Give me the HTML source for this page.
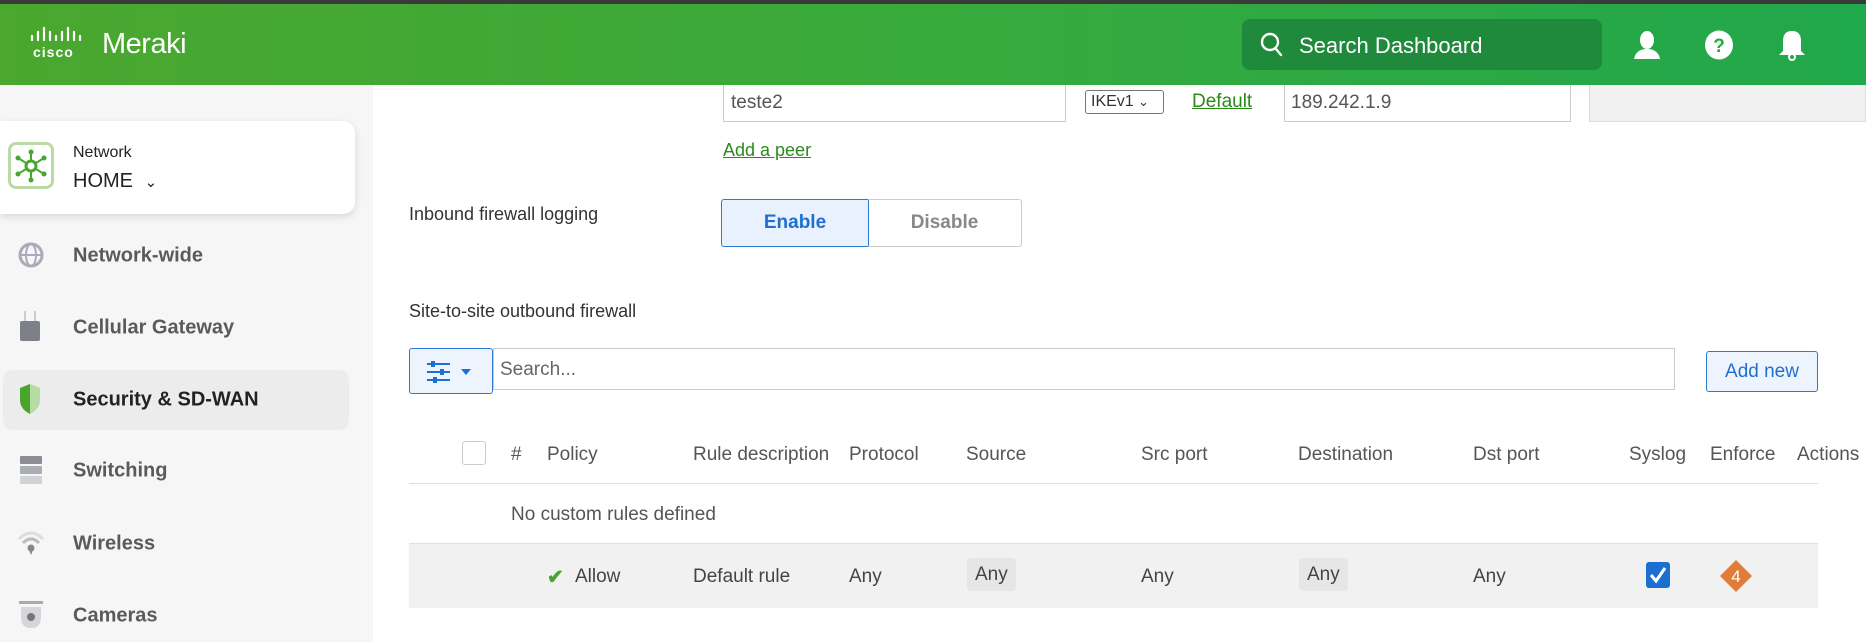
<!DOCTYPE html>
<html><head><meta charset="utf-8"><style>
*{box-sizing:border-box;margin:0;padding:0}
body{width:1866px;height:642px;overflow:hidden;background:#fff;font-family:"Liberation Sans",sans-serif;position:relative;color:#444}
.a{position:absolute;white-space:nowrap}
#top{left:0;top:0;width:1866px;height:4px;background:#3a3a3a}
#hdr{left:0;top:4px;width:1866px;height:81px;background:linear-gradient(90deg,#4ba72e 0%,#38aa3c 50%,#20a84c 100%)}
#side{left:0;top:85px;width:373px;height:557px;background:#f6f6f6}
.nav{left:73px;font-size:20px;font-weight:bold;color:#5a5a5a;transform:translateY(-50%)}
.ic{left:17px;transform:translateY(-50%)}
.hd{top:455px;font-size:19px;color:#555;transform:translateY(-50%)}
.rw{top:577px;font-size:19px;color:#444;transform:translateY(-50%)}
.any{background:#e6e6e6;border-radius:4px;padding:6px 8px;margin-left:-8px}
</style></head><body>
<div class="a" id="top"></div>
<div class="a" id="hdr"></div>
<svg class="a" style="left:30px;top:26px" width="58" height="34" viewBox="0 0 58 34">
<g stroke="#fff" stroke-width="2.2" stroke-linecap="round">
<line x1="2" y1="10" x2="2" y2="14"/><line x1="8" y1="6" x2="8" y2="14"/><line x1="14" y1="2" x2="14" y2="14"/><line x1="20" y1="6" x2="20" y2="14"/><line x1="26" y1="10" x2="26" y2="14"/><line x1="32" y1="6" x2="32" y2="14"/><line x1="38" y1="2" x2="38" y2="14"/><line x1="44" y1="6" x2="44" y2="14"/><line x1="50" y1="10" x2="50" y2="14"/></g>
<text x="3" y="31" fill="#fff" font-family="Liberation Sans" font-weight="bold" font-size="14" letter-spacing="1">cisco</text></svg>
<div class="a" style="left:102px;top:28px;font-size:29px;color:#fff;letter-spacing:-0.5px">Meraki</div>
<div class="a" style="left:1242px;top:19px;width:360px;height:51px;background:#1f8a3c;border-radius:8px"></div>
<svg class="a" style="left:1260px;top:32px" width="24" height="26" viewBox="0 0 24 26"><circle cx="10" cy="10" r="8" fill="none" stroke="#fff" stroke-width="2.4"/><line x1="16" y1="17" x2="21" y2="23" stroke="#fff" stroke-width="2.4" stroke-linecap="round"/></svg>
<div class="a" style="left:1299px;top:33px;font-size:22px;color:#fff">Search Dashboard</div>
<svg class="a" style="left:1632px;top:30px" width="30" height="30" viewBox="0 0 30 30"><ellipse cx="15" cy="10" rx="7" ry="9" fill="#fff"/><path d="M2 29 Q4 19 15 19 Q26 19 28 29Z" fill="#fff"/></svg>
<svg class="a" style="left:1704px;top:30px" width="30" height="30" viewBox="0 0 30 30"><ellipse cx="15" cy="15" rx="14" ry="14.5" fill="#fff"/><text x="15" y="22" text-anchor="middle" font-family="Liberation Sans" font-weight="bold" font-size="19" fill="#2aa83f">?</text></svg>
<svg class="a" style="left:1777px;top:29px" width="30" height="32" viewBox="0 0 30 32"><path d="M15 2 Q6 2 6 12 L6 22 L2 26 L28 26 L24 22 L24 12 Q24 2 15 2Z" fill="#fff"/><circle cx="15" cy="28" r="3" fill="none" stroke="#fff" stroke-width="2"/></svg>

<div class="a" id="side"></div>
<div class="a" style="left:0;top:121px;width:355px;height:93px;background:#fff;border-radius:0 12px 12px 0;box-shadow:0 3px 8px rgba(0,0,0,.12)"></div>
<div class="a" style="left:8px;top:142px;width:46px;height:47px;border:3px solid #b9dca6;border-radius:8px;background:#fff"></div>
<svg class="a" style="left:14px;top:148px" width="34" height="36" viewBox="0 0 34 36"><g stroke="#4aa52e" stroke-width="2"><line x1="17" y1="4" x2="17" y2="32"/><line x1="4" y1="10" x2="30" y2="26"/><line x1="4" y1="26" x2="30" y2="10"/></g><g fill="#4aa52e"><circle cx="17" cy="4" r="2.5"/><circle cx="17" cy="32" r="2.5"/><circle cx="4" cy="10" r="2.5"/><circle cx="30" cy="26" r="2.5"/><circle cx="4" cy="26" r="2.5"/><circle cx="30" cy="10" r="2.5"/></g><circle cx="17" cy="18" r="5" fill="#fff" stroke="#4aa52e" stroke-width="3"/></svg>
<div class="a" style="left:73px;top:144px;font-size:16px;color:#222">Network</div>
<div class="a" style="left:73px;top:170px;font-size:20px;color:#222">HOME <span style="font-size:15px;margin-left:6px">&#8964;</span></div>

<div class="a" style="left:3px;top:370px;width:346px;height:60px;background:#ececec;border-radius:10px"></div>
<svg class="a ic" style="top:255px" width="28" height="32" viewBox="0 0 28 32"><circle cx="14" cy="16" r="11" fill="none" stroke="#aab" stroke-width="3"/><ellipse cx="14" cy="16" rx="5" ry="11" fill="none" stroke="#aab" stroke-width="2"/><line x1="3" y1="16" x2="25" y2="16" stroke="#aab" stroke-width="2"/></svg>
<div class="a nav" style="top:256px">Network-wide</div>
<svg class="a ic" style="top:327px" width="26" height="32" viewBox="0 0 26 32"><rect x="3" y="10" width="20" height="20" rx="2" fill="#7d8088"/><rect x="7" y="0" width="2" height="10" fill="#ccc"/><rect x="17" y="0" width="2" height="10" fill="#ccc"/></svg>
<div class="a nav" style="top:328px">Cellular Gateway</div>
<svg class="a ic" style="top:399px" width="26" height="32" viewBox="0 0 26 32"><path d="M13 1 L13 31 Q3 26 3 17 L3 5Z" fill="#4aa52e"/><path d="M13 1 L23 5 L23 17 Q23 26 13 31Z" fill="#b6dba3"/></svg>
<div class="a nav" style="top:400px;color:#222">Security &amp; SD-WAN</div>
<svg class="a ic" style="top:470px" width="26" height="30" viewBox="0 0 26 30"><rect x="3" y="1" width="22" height="8" rx="1" fill="#8a8d94"/><rect x="3" y="11" width="22" height="8" rx="1" fill="#aaadb3"/><rect x="3" y="21" width="22" height="8" rx="1" fill="#d0d2d6"/></svg>
<div class="a nav" style="top:471px">Switching</div>
<svg class="a ic" style="top:543px" width="28" height="28" viewBox="0 0 28 28"><path d="M2 10 Q14 -2 26 10" fill="none" stroke="#ddd" stroke-width="3"/><path d="M6 14 Q14 6 22 14" fill="none" stroke="#bbb" stroke-width="3"/><circle cx="14" cy="19" r="3.5" fill="#888"/><path d="M12 21 L14 26 L16 21Z" fill="#888"/></svg>
<div class="a nav" style="top:544px">Wireless</div>
<svg class="a ic" style="top:615px" width="28" height="30" viewBox="0 0 28 30"><rect x="2" y="1" width="24" height="3" fill="#aaa"/><path d="M4 7 L24 7 L24 17 Q24 28 14 28 Q4 28 4 17Z" fill="#d4d6da"/><circle cx="14" cy="17" r="4" fill="#777"/></svg>
<div class="a nav" style="top:616px">Cameras</div>

<div class="a" style="left:723px;top:85px;width:343px;height:37px;border:1px solid #ccc;border-top:none"></div>
<div class="a" style="left:731px;top:92px;font-size:19px;color:#555">teste2</div>
<div class="a" style="left:1085px;top:90px;width:79px;height:24px;border:1px solid #777;border-radius:3px;font-size:16px;color:#333;padding:2px 5px">IKEv1 <span style="font-size:13px">&#8964;</span></div>
<div class="a" style="left:1192px;top:91px;font-size:19px;color:#2a8a1a;text-decoration:underline">Default</div>
<div class="a" style="left:1284px;top:85px;width:287px;height:37px;border:1px solid #ccc;border-top:none"></div>
<div class="a" style="left:1291px;top:92px;font-size:19px;color:#555">189.242.1.9</div>
<div class="a" style="left:1589px;top:85px;width:277px;height:37px;background:#f1f1f1;border:1px solid #ddd;border-top:none"></div>
<div class="a" style="left:723px;top:140px;font-size:18px;color:#2a8a1a;text-decoration:underline">Add a peer</div>

<div class="a" style="left:409px;top:204px;font-size:18px;color:#333">Inbound firewall logging</div>
<div class="a" style="left:721px;top:199px;width:148px;height:48px;background:#e8f1fd;border:1px solid #2a7ad6;border-radius:3px 0 0 3px;font-size:19px;font-weight:bold;color:#1f6fd0;text-align:center;line-height:46px">Enable</div>
<div class="a" style="left:868px;top:199px;width:154px;height:48px;border:1px solid #ccc;border-left:none;border-radius:0 3px 3px 0;font-size:19px;font-weight:bold;color:#888;text-align:center;line-height:46px">Disable</div>

<div class="a" style="left:409px;top:301px;font-size:18px;color:#333">Site-to-site outbound firewall</div>
<div class="a" style="left:409px;top:348px;width:84px;height:46px;background:#edf4fd;border:1px solid #2a7ad6;border-radius:3px"></div>
<svg class="a" style="left:426px;top:360px" width="50" height="24" viewBox="0 0 50 24"><g stroke="#1f6fd0" stroke-width="2"><line x1="1" y1="4" x2="24" y2="4"/><line x1="1" y1="12" x2="24" y2="12"/><line x1="1" y1="20" x2="24" y2="20"/></g><g fill="#1f6fd0"><rect x="5" y="1" width="4" height="6"/><rect x="14" y="9" width="4" height="6"/><rect x="7" y="17" width="4" height="6"/><path d="M35 9 L45 9 L40 15Z"/></g></svg>
<div class="a" style="left:493px;top:348px;width:1182px;height:42px;border:1px solid #ccc"></div>
<div class="a" style="left:500px;top:359px;font-size:19px;color:#666">Search...</div>
<div class="a" style="left:1706px;top:351px;width:112px;height:41px;background:#edf4fd;border:1px solid #2a7ad6;border-radius:3px;font-size:19px;color:#1f6fd0;text-align:center;line-height:39px">Add new</div>

<div class="a" style="left:462px;top:441px;width:24px;height:24px;border:1px solid #ccc;border-radius:3px;background:#fff"></div>
<div class="a hd" style="left:511px">#</div>
<div class="a hd" style="left:547px">Policy</div>
<div class="a hd" style="left:693px">Rule description</div>
<div class="a hd" style="left:849px">Protocol</div>
<div class="a hd" style="left:966px">Source</div>
<div class="a hd" style="left:1141px">Src port</div>
<div class="a hd" style="left:1298px">Destination</div>
<div class="a hd" style="left:1473px">Dst port</div>
<div class="a hd" style="left:1629px">Syslog</div>
<div class="a hd" style="left:1710px">Enforce</div>
<div class="a hd" style="left:1797px">Actions</div>
<div class="a" style="left:409px;top:483px;width:1409px;height:1px;background:#ddd"></div>
<div class="a" style="left:511px;top:504px;font-size:19px;color:#555">No custom rules defined</div>
<div class="a" style="left:409px;top:543px;width:1409px;height:65px;background:#f1f1f1;border-top:1px solid #e0e0e0"></div>
<div class="a rw" style="left:547px;color:#4aa52e;font-size:20px;font-weight:bold">&#10004;</div>
<div class="a rw" style="left:575px">Allow</div>
<div class="a rw" style="left:693px">Default rule</div>
<div class="a rw" style="left:849px">Any</div>
<div class="a rw" style="left:975px;top:575px"><span class="any">Any</span></div>
<div class="a rw" style="left:1141px">Any</div>
<div class="a rw" style="left:1307px;top:575px"><span class="any">Any</span></div>
<div class="a rw" style="left:1473px">Any</div>
<svg class="a" style="left:1646px;top:562px" width="24" height="26" viewBox="0 0 24 26"><rect x="0" y="0" width="24" height="26" rx="3" fill="#1a6fd1"/><path d="M5 13 L10 19 L19 6" fill="none" stroke="#fff" stroke-width="3"/></svg>
<svg class="a" style="left:1719px;top:559px" width="34" height="34" viewBox="0 0 34 34"><path d="M17 1 L33 17 L17 33 L1 17Z" fill="#e07b39"/><text x="17" y="23" text-anchor="middle" font-family="Liberation Sans" font-size="17" fill="#fff">4</text></svg>
</body></html>
